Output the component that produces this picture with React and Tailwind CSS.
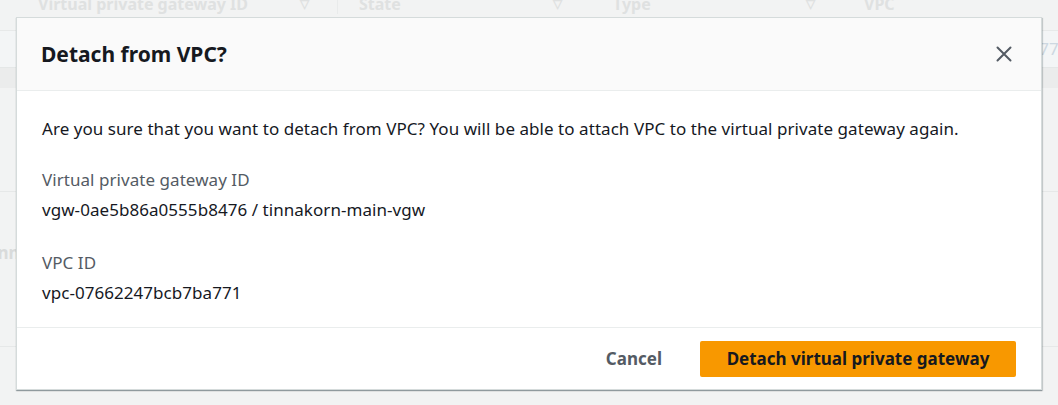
import React from "react";

function BgHeader() {
  return (
    <div className="h-[31px] flex items-start border-b border-[#e7e9e9] overflow-hidden">
      <div className="flex items-start -mt-[6px] text-[16px] font-bold text-[#dfe1e1] leading-[20px]">
        <div className="w-[337px] pl-[38px] flex">
          <span className="w-[262px]">Virtual private gateway ID</span>
          <span className="text-[12px]">▽</span>
        </div>
        <div className="w-[276px] pl-[21px] flex border-l border-[#e9ebeb]">
          <span className="w-[194px]">State</span>
          <span className="text-[12px]">▽</span>
        </div>
        <div className="w-[251px] flex">
          <span className="w-[193px]">Type</span>
          <span className="text-[12px]">▽</span>
        </div>
        <div className="flex">
          <span>VPC</span>
        </div>
      </div>
    </div>
  );
}

function CloseIcon() {
  return (
    <svg width="16" height="16" viewBox="0 0 16 16" fill="none" stroke="#545b64" strokeWidth="2" strokeLinecap="round">
      <path d="M1.5 1.5 L14.5 14.5 M14.5 1.5 L1.5 14.5" />
    </svg>
  );
}

export default function App() {
  return (
    <div className="relative w-[1058px] h-[405px] overflow-hidden bg-[#f2f3f3] font-['Noto_Sans','Open_Sans',sans-serif]">
      <BgHeader />
      <div className="h-[37px] flex items-center border-b border-[#e4e7e7] bg-[#f3f5f6] overflow-hidden">
        <span className="ml-[870px] whitespace-nowrap text-[17px] text-[#cdd8e1]">vpc-07662247bcb7ba771</span>
      </div>
      <div className="h-[20px] bg-[#ebecec]" />
      <div className="h-[104px] border-b border-[#e6e8e8]" />
      <div className="h-[155px] border-b border-[#e6e8e8] overflow-hidden">
        <div className="mt-[50px] -ml-[15px] whitespace-nowrap text-[17px] font-bold text-[#d9dbdb] leading-[22px]">tinnakorn-main-vgw</div>
      </div>

      <div className="absolute left-[16px] top-[17px] w-[1026px] h-[373px] bg-white border border-[#d5dbdb] shadow-[0_1px_1px_0_rgba(0,28,36,0.3),1px_1px_1px_0_rgba(0,28,36,0.15)] flex flex-col">
        <div className="h-[73px] shrink-0 bg-[#fafafa] border-b border-[#eaeded] flex items-center justify-between pl-[24px] pr-[29px]">
          <h2 className="text-[21px] font-bold text-[#16191f] leading-[26px]">Detach from VPC?</h2>
          <CloseIcon />
        </div>
        <div className="flex-1 border-b border-[#eaeded] px-[25px] pt-[27px] text-[17px] leading-[22px] tracking-[0.05px] text-[#16191f]">
          <p>Are you sure that you want to detach from VPC? You will be able to attach VPC to the virtual private gateway again.</p>
          <div className="mt-[29px] text-[#545b64]">Virtual private gateway ID</div>
          <div className="mt-[8px]">vgw-0ae5b86a0555b8476 / tinnakorn-main-vgw</div>
          <div className="mt-[31px] text-[#545b64]">VPC ID</div>
          <div className="mt-[8px]">vpc-07662247bcb7ba771</div>
        </div>
        <div className="h-[61px] shrink-0 flex items-center justify-end pr-[25px] gap-[18px]">
          <button className="px-[20px] h-[36px] text-[17px] font-bold text-[#545b64]">Cancel</button>
          <button className="w-[316px] h-[36px] rounded-[2px] bg-[#f89800] text-[17px] font-bold text-[#16191f]">Detach virtual private gateway</button>
        </div>
      </div>
    </div>
  );
}
